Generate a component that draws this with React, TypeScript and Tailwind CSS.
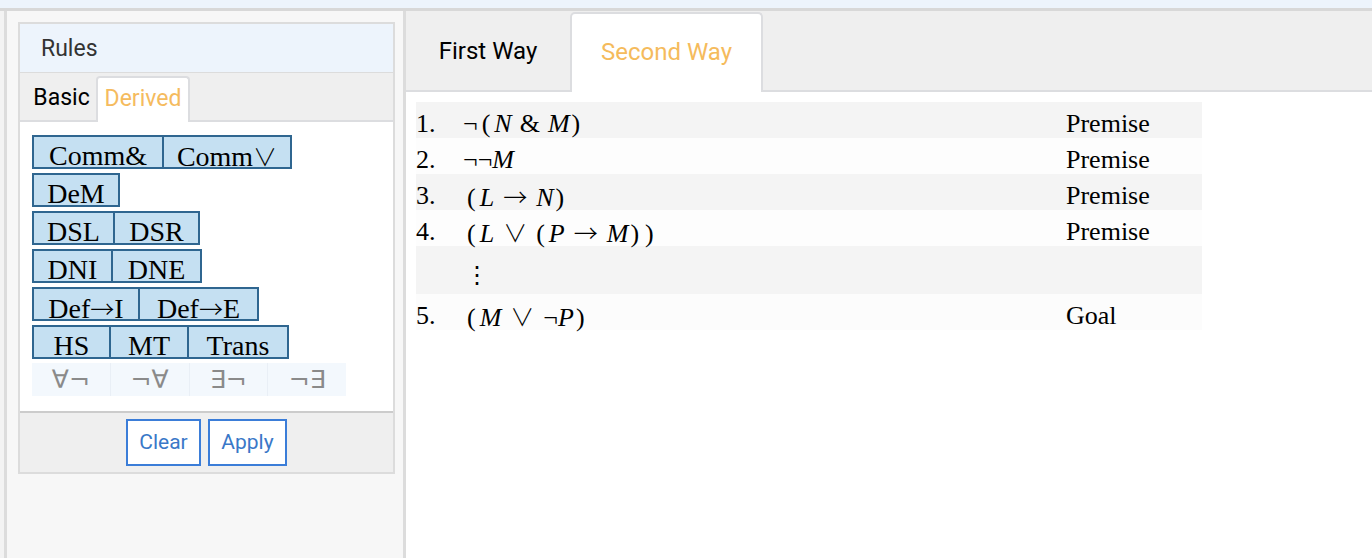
import React from 'react'

type Rule = { label: React.ReactNode; key: string; w: string }

// thin math symbols, taken from the CJK face
const Sym = ({ c, cls = '' }: { c: string; cls?: string }) => (
  <span className={`font-['Noto_Sans_CJK_JP',sans-serif] font-light ${cls}`}>{c}</span>
)

const ruleRows: Rule[][] = [
  [
    { key: 'comm-and', label: 'Comm&', w: 'w-[132px]' },
    { key: 'comm-or', label: <>Comm<Sym c="∨" cls="text-[24px]" /></>, w: 'w-[128px]' },
  ],
  [{ key: 'dem', label: 'DeM', w: 'w-[88px]' }],
  [
    { key: 'dsl', label: 'DSL', w: 'w-[83px]' },
    { key: 'dsr', label: 'DSR', w: 'w-[85px]' },
  ],
  [
    { key: 'dni', label: 'DNI', w: 'w-[81px]' },
    { key: 'dne', label: 'DNE', w: 'w-[89px]' },
  ],
  [
    { key: 'defi', label: <>Def<Sym c="→" cls="text-[24px]" />I</>, w: 'w-[108px]' },
    { key: 'defe', label: <>Def<Sym c="→" cls="text-[24px]" />E</>, w: 'w-[119px]' },
  ],
  [
    { key: 'hs', label: 'HS', w: 'w-[79px]' },
    { key: 'mt', label: 'MT', w: 'w-[78px]' },
    { key: 'trans', label: 'Trans', w: 'w-[100px]' },
  ],
]

const quantifiers = ['∀¬', '¬∀', '∃¬', '¬∃']

const V = ({ children }: { children: React.ReactNode }) => <i className="italic">{children}</i>
const Op = ({ c }: { c: string }) => <Sym c={c} cls="mx-[9px] text-[24px]" />
const Open = ({ cls = 'ml-[4px]' }: { cls?: string }) => <span className={`${cls} pr-[4px]`}>(</span>
const Close = ({ cls = '' }: { cls?: string }) => <span className={`${cls} pl-[2px]`}>)</span>

const proofRows: { n: string; formula: React.ReactNode; just: string; shade: boolean }[] = [
  {
    n: '1.',
    formula: (
      <>
        ¬<Open cls="ml-[4px]" />
        <V>N</V>
        <span className="mx-[8px]">&amp;</span>
        <V>M</V>
        <Close />
      </>
    ),
    just: 'Premise',
    shade: true,
  },
  {
    n: '2.',
    formula: (
      <>
        ¬¬<V>M</V>
      </>
    ),
    just: 'Premise',
    shade: false,
  },
  {
    n: '3.',
    formula: (
      <>
        <Open />
        <V>L</V>
        <Op c="→" />
        <V>N</V>
        <Close />
      </>
    ),
    just: 'Premise',
    shade: true,
  },
  {
    n: '4.',
    formula: (
      <>
        <Open />
        <V>L</V>
        <Op c="∨" />
        <Open cls="" />
        <V>P</V>
        <Op c="→" />
        <V>M</V>
        <Close />
        <Close cls="ml-[4px]" />
      </>
    ),
    just: 'Premise',
    shade: false,
  },
]

function RuleButton({ rule, first }: { rule: Rule; first: boolean }) {
  return (
    <div
      role="button"
      className={`${rule.w} h-[34px] border-2 ${
        first ? '' : 'border-l-0'
      } cursor-pointer border-[#2f6690] bg-[#c5e0f2] pt-[6px] text-center font-['Liberation_Serif',serif] text-[28px] leading-[26px] text-black`}
    >
      {rule.label}
    </div>
  )
}

export default function App() {
  return (
    <div className="flex h-[558px] w-[1372px] flex-col overflow-hidden bg-white font-['Roboto',sans-serif]">
      {/* top strip */}
      <div className="h-[8px] shrink-0 bg-[#edf4fc]" />
      <div className="h-[3px] shrink-0 bg-[#d8d8d8]" />

      <div className="flex flex-1">
        <div className="w-[4px] bg-[#f3f3f3]" />

        {/* Sidebar */}
        <aside className="w-[402px] shrink-0 border-x-[3px] border-[#dcdcdc] bg-[#f7f7f7] pl-[11px] pt-[11px]">
          <div className="w-[377px] border-2 border-[#dcdcdc]">
            <div className="flex h-[49px] items-center border-b border-[#dcdcdc] bg-[#edf4fc] pl-[21px] pt-[2px] text-[23px] text-[#333]">
              Rules
            </div>

            <div className="flex h-[49px] items-end border-b-2 border-[#dcdde0] bg-[#efefef] pl-[7px]">
              <div className="flex h-[44px] w-[69px] items-center justify-center text-[23px] text-black">
                Basic
              </div>
              <div className="-mb-[2px] flex h-[46px] w-[94px] items-center justify-center rounded-t-[4px] border-2 border-b-0 border-[#dcdde0] bg-white pb-[2px] text-[23px] text-[#f5bb5e]">
                Derived
              </div>
            </div>

            <div className="flex h-[289px] flex-col gap-[4px] bg-white pl-[12px] pt-[13px]">
              {ruleRows.map((row, i) => (
                <div key={i} className="flex">
                  {row.map((rule, j) => (
                    <RuleButton key={rule.key} rule={rule} first={j === 0} />
                  ))}
                </div>
              ))}
              <div className="flex h-[33px] w-[314px] bg-[#f3f8fd]">
                {quantifiers.map((q, i) => (
                  <div
                    key={q}
                    className={`flex flex-1 items-end justify-center pb-[1px] font-['DejaVu_Sans',sans-serif] text-[25px] leading-[30px] text-[#8a8a8a] ${
                      i < 3 ? 'border-r border-[#e9eff6]' : ''
                    }`}
                  >
                    {q}
                  </div>
                ))}
              </div>
            </div>

            <div className="flex h-[61px] items-center justify-center gap-[7px] border-t-2 border-[#cccccc] bg-[#efefef]">
              <button className="h-[47px] w-[75px] border-2 border-[#3b7dd8] bg-white text-[21px] text-[#3a78c8]">
                Clear
              </button>
              <button className="h-[47px] w-[79px] border-2 border-[#3b7dd8] bg-white text-[21px] text-[#3a78c8]">
                Apply
              </button>
            </div>
          </div>
        </aside>

        {/* Main */}
        <main className="flex flex-1 flex-col">
          <div className="flex h-[81px] shrink-0 items-end border-b-2 border-[#dcdde0] bg-[#efefef]">
            <div className="flex h-[78px] w-[164px] items-center justify-center text-[24px] text-black">
              First Way
            </div>
            <div className="-mb-[2px] flex h-[80px] w-[193px] items-center justify-center rounded-t-[5px] border-2 border-b-0 border-[#dcdde0] bg-white pb-[2px] text-[24px] text-[#f5bb5c]">
              Second Way
            </div>
          </div>

          <div className="pl-[10px] pt-[10px] font-['Liberation_Serif',serif] text-[26px] text-black">
            <div className="w-[786px]">
              {proofRows.map((r) => (
                <div
                  key={r.n}
                  className={`flex h-[36px] pt-[5px] leading-[33px] ${r.shade ? 'bg-[#f4f4f4]' : 'bg-[#fdfdfd]'}`}
                >
                  <div className="w-[47px]">{r.n}</div>
                  <div className="w-[603px] whitespace-pre">{r.formula}</div>
                  <div className="flex-1">{r.just}</div>
                </div>
              ))}
              <div className="flex h-[48px] bg-[#f4f4f4] pt-[13px] leading-[33px]">
                <div className="w-[47px]" />
                <div className="w-[603px] pl-[2px] font-['DejaVu_Serif',serif] text-[24px]">⋮</div>
              </div>
              <div className="flex h-[36px] bg-[#fcfcfc] pt-[5px] leading-[33px]">
                <div className="w-[47px]">5.</div>
                <div className="w-[603px] whitespace-pre">
                  <Open />
                  <V>M</V>
                  <Op c="∨" />¬<V>P</V>
                  <Close />
                </div>
                <div className="flex-1">Goal</div>
              </div>
            </div>
          </div>
        </main>
      </div>
    </div>
  )
}
